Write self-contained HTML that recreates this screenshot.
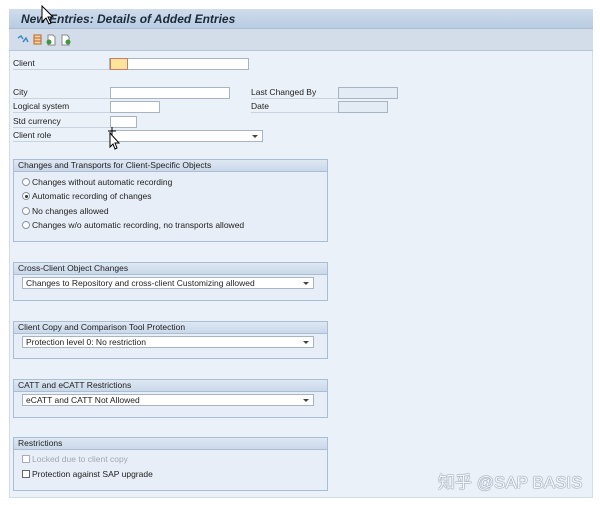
<!DOCTYPE html>
<html><head><meta charset="utf-8"><style>
*{margin:0;padding:0;box-sizing:border-box}
body{width:600px;height:505px;background:#fff;position:relative;overflow:hidden;font-family:"Liberation Sans",Tahoma,sans-serif;font-size:8.5px;color:#222}
.a{position:absolute}
#panel{left:9px;top:9px;width:584px;height:489px;background:#ebf1f8;border:1px solid #d3dbe5}
#title{left:9px;top:9px;width:584px;height:20px;background:linear-gradient(#cfdcec,#b9cce2);border-bottom:1px solid #a9bdd6}
#title span{position:absolute;left:12px;top:3px;font-size:12px;font-weight:bold;font-style:italic;color:#1d2a3a}
#tb{left:9px;top:29px;width:584px;height:22px;background:#d2dde9;border-bottom:1px solid #b8c6d6}
.lbl{position:absolute;height:12px;border-bottom:1px solid #c9d2dd;line-height:11px;color:#222}
.in{position:absolute;height:12px;background:#fff;border:1px solid #a8b4c2}
.ro{background:#e3ebf4;border-color:#a9b4c0}
.sel::after{content:"";position:absolute;right:4px;top:4px;border:3px solid transparent;border-top:3px solid #444;border-bottom:0}
.grp{position:absolute;left:13px;width:315px;border:1px solid #a9bdd3;background:#e7eef7}
.gh{height:12px;background:linear-gradient(#dfe8f3,#c9d8ea);border-bottom:1px solid #a9bdd3;padding-left:4px;line-height:11px}
.r{position:absolute;left:8px;line-height:10px}
.r i{display:inline-block;width:8px;height:8px;border:1px solid #8a95a3;border-radius:50%;background:#fff;vertical-align:-1px;margin-right:2px;position:relative}
.r i.on::after{content:"";position:absolute;left:1.5px;top:1.5px;width:3px;height:3px;border-radius:50%;background:#333}
.r b{display:inline-block;width:8px;height:8px;border:1px solid #666;background:#fff;vertical-align:-1px;margin-right:2px;font-weight:normal}
.s{position:absolute;left:8px;width:292px;height:12px;background:#fff;border:1px solid #a8b4c2;padding-left:3px;line-height:10px}
.s::after{content:"";position:absolute;right:4px;top:4px;border:3px solid transparent;border-top:3px solid #444;border-bottom:0}
</style></head><body>
<div id="panel" class="a"></div>
<div id="title" class="a"><span>New Entries: Details of Added Entries</span></div>
<div id="tb" class="a">
<svg class="a" style="left:8px;top:5px" width="60" height="12">
<path d="M1 4l3-2 2 3M6 8l3-4 2 4" stroke="#3b8cc4" stroke-width="1.5" fill="none"/>
<rect x="17" y="1" width="7" height="9" fill="#f0d8a0" stroke="#c0602a"/><line x1="17" y1="4" x2="24" y2="4" stroke="#c0602a"/><line x1="17" y1="7" x2="24" y2="7" stroke="#c0602a"/>
<path d="M31 1h5l2 2v8h-7z" fill="#fff" stroke="#888"/><circle cx="32" cy="8" r="2.5" fill="#3a9a3a"/>
<path d="M45 1h5l2 2v8h-7z" fill="#fff" stroke="#888"/><circle cx="51" cy="8" r="2.5" fill="#3a9a3a"/>
</svg></div>

<div class="lbl" style="left:13px;top:58px;width:96px">Client</div>
<div class="in" style="left:109px;top:58px;width:140px"></div>
<div class="a" style="left:110px;top:58px;width:18px;height:12px;background:#fbe59a;border:1px solid #d07a6a"></div>

<div class="lbl" style="left:13px;top:87px;width:97px">City</div>
<div class="in" style="left:110px;top:87px;width:120px"></div>
<div class="lbl" style="left:251px;top:87px;width:87px">Last Changed By</div>
<div class="in ro" style="left:338px;top:87px;width:60px"></div>
<div class="lbl" style="left:13px;top:101px;width:97px">Logical system</div>
<div class="in" style="left:110px;top:101px;width:50px"></div>
<div class="lbl" style="left:251px;top:101px;width:87px">Date</div>
<div class="in ro" style="left:338px;top:101px;width:50px"></div>
<div class="lbl" style="left:13px;top:116px;width:97px">Std currency</div>
<div class="in" style="left:110px;top:116px;width:27px"></div>
<div class="lbl" style="left:13px;top:130px;width:97px">Client role</div>
<div class="in sel" style="left:110px;top:130px;width:153px"></div>

<div class="grp" style="top:159px;height:83px"><div class="gh">Changes and Transports for Client-Specific Objects</div>
<div class="r" style="top:17px"><i></i>Changes without automatic recording</div>
<div class="r" style="top:31px"><i class="on"></i>Automatic recording of changes</div>
<div class="r" style="top:46px"><i></i>No changes allowed</div>
<div class="r" style="top:60px"><i></i>Changes w/o automatic recording, no transports allowed</div>
</div>
<div class="grp" style="top:262px;height:39px"><div class="gh">Cross-Client Object Changes</div><div class="s" style="top:14px">Changes to Repository and cross-client Customizing allowed</div></div>
<div class="grp" style="top:321px;height:38px"><div class="gh">Client Copy and Comparison Tool Protection</div><div class="s" style="top:14px">Protection level 0: No restriction</div></div>
<div class="grp" style="top:379px;height:39px"><div class="gh">CATT and eCATT Restrictions</div><div class="s" style="top:14px">eCATT and CATT Not Allowed</div></div>
<div class="grp" style="top:437px;height:54px"><div class="gh">Restrictions</div>
<div class="r" style="top:16px;color:#a0a8b2"><b style="border-color:#aab"></b>Locked due to client copy</div>
<div class="r" style="top:31px"><b></b>Protection against SAP upgrade</div>
</div>
<div class="a" style="left:438px;top:468px;font-size:17px;color:#f4f7fb;font-family:'Liberation Sans','Noto Sans CJK SC',sans-serif;text-shadow:0 0 1px #7d8a9b,0 0 1px #7d8a9b,0 0 1px #7d8a9b">知乎 @SAP BASIS</div>
<svg class="a" style="left:41px;top:5px" width="14" height="22"><path d="M1 1v16l4-4 3 6 2-1-3-6h5z" fill="#fff" stroke="#000"/></svg>
<svg class="a" style="left:102px;top:127px" width="20" height="24"><path d="M6 4h8M10 0v8" stroke="#000"/><path d="M8 6v14l3-3 2 5 2-1-2-5h4z" fill="#fff" stroke="#000"/></svg>
</body></html>
